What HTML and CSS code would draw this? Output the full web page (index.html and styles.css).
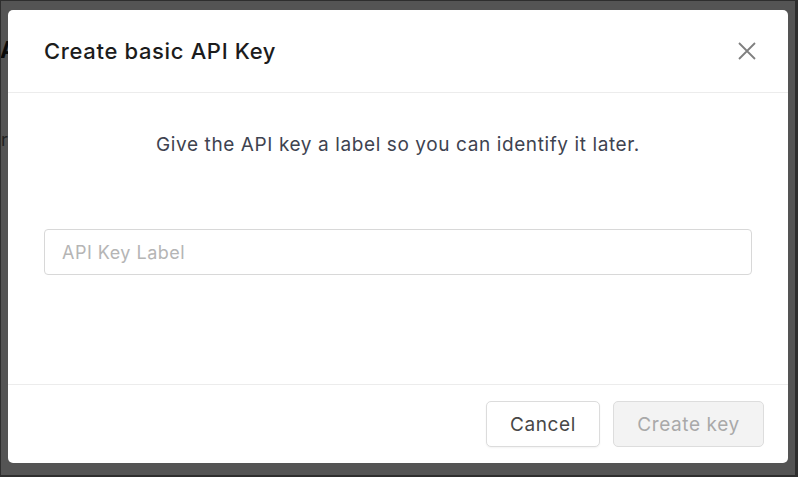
FILE: index.html
```html
<!DOCTYPE html>
<html>
<head>
<meta charset="utf-8">
<link rel="stylesheet" href="styles.css">
</head>
<body>
<div class="frame">
  <div class="page">
    <div class="page-title">A</div>
    <div class="page-text">r</div>
  </div>
  <div class="overlay"></div>
  <div class="modal">
    <div class="modal-header">
      <h2 class="modal-title">Create basic API Key</h2>
      <button class="close" aria-label="Close">
        <svg width="18" height="18" viewBox="0 0 18 18"><path d="M1 1 L17 17 M17 1 L1 17" stroke="#7f7f7f" stroke-width="1.8" fill="none"/></svg>
      </button>
    </div>
    <div class="modal-body">
      <p class="hint">Give the API key a label so you can identify it later.</p>
      <input class="field" type="text" placeholder="API Key Label">
    </div>
    <div class="modal-footer">
      <button class="btn btn-cancel">Cancel</button>
      <button class="btn btn-create" disabled>Create key</button>
    </div>
  </div>
</div>
</body>
</html>
```
FILE: styles.css
```css
* { box-sizing: border-box; }
html, body { margin: 0; padding: 0; }
body {
  width: 798px;
  height: 477px;
  overflow: hidden;
  font-family: "Inter", "Noto Sans", sans-serif;
  background: #333;
}
.frame {
  position: relative;
  width: 798px;
  height: 477px;
  border-style: solid;
  border-color: #2e2e2e;
  border-width: 1px 3px 2px 1px;
  overflow: hidden;
  background: #fff;
}
.page-title {
  position: absolute;
  left: -1px;
  top: 35px;
  font-size: 23px;
  font-weight: 700;
  color: #0a0a0a;
  z-index: 3;
}
.page-text {
  position: absolute;
  left: 0;
  top: 128px;
  font-size: 18px;
  color: #222;
  z-index: 3;
}
.overlay {
  position: absolute;
  inset: 0;
  background: #545454;
  z-index: 1;
}
.modal {
  position: absolute;
  left: 7px;
  top: 9px;
  width: 780px;
  height: 453px;
  background: #fff;
  border-radius: 5px;
  z-index: 4;
  display: flex;
  flex-direction: column;
}
.modal-header {
  height: 83px;
  border-bottom: 1px solid #ececec;
  display: flex;
  align-items: center;
  justify-content: space-between;
  padding: 0 32px 0 36px;
}
.modal-title {
  margin: 0;
  font-size: 22px;
  font-weight: 500;
  color: #1c1c1c;
  letter-spacing: 0.65px;
}
.close {
  border: 0;
  background: none;
  padding: 0;
  width: 18px;
  height: 18px;
  display: flex;
  cursor: pointer;
}
.modal-body {
  flex: 1;
  border-bottom: 1px solid #ececec;
  padding: 37px 36px 0 36px;
  display: flex;
  flex-direction: column;
}
.hint {
  margin: 0;
  text-align: center;
  font-size: 19px;
  letter-spacing: 0.6px;
  line-height: 30px;
  color: #3e4350;
}
.field {
  margin-top: 69px;
  width: 100%;
  height: 46px;
  border: 1px solid #d8d8d8;
  border-radius: 4px;
  padding: 0 17px;
  font-family: inherit;
  font-size: 18px;
  letter-spacing: 0.5px;
  color: #333;
  outline: none;
}
.field::placeholder { color: #b5b5b5; }
.modal-footer {
  height: 78px;
  display: flex;
  justify-content: flex-end;
  align-items: flex-start;
  gap: 13px;
  padding: 16px 24px 0 0;
}
.btn {
  height: 46px;
  border-radius: 5px;
  font-family: inherit;
  font-size: 19px;
  letter-spacing: 0.6px;
  padding: 0;
}
.btn-cancel {
  background: #fff;
  border: 1px solid #dcdcdc;
  color: #474747;
  width: 114px;
  box-shadow: 0 1px 2px rgba(0,0,0,0.05);
}
.btn-create {
  background: #f3f3f3;
  border: 1px solid #dddddd;
  color: #a9a9a9;
  width: 151px;
}
```
